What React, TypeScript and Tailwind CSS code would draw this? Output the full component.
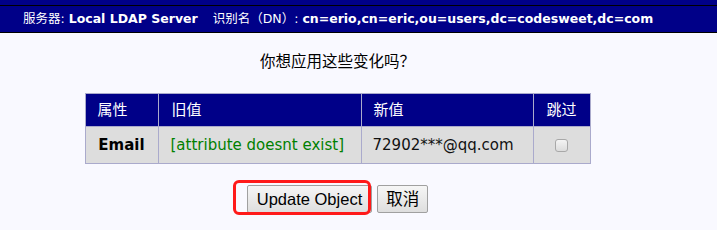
import React from "react";

export default function App() {
  const ui = { fontFamily: '"DejaVu Sans", "Noto Sans CJK SC", sans-serif' };
  return (
    <div className="w-[717px] h-[230px] bg-[#f9f9ff] overflow-hidden" style={ui}>
      <div className="h-[33px] bg-[#000088] pt-[5px]">
        <div className="h-[28px] border-t border-b border-black flex items-center pl-[23px] text-white text-[12.5px] whitespace-nowrap">
          <span className="font-normal">服务器:</span>
          <span className="font-bold ml-[4px]">Local LDAP Server</span>
          <span className="ml-[15px]">识别名（DN）:</span>
          <span className="font-bold ml-[4px]">cn=erio,cn=eric,ou=users,dc=codesweet,dc=com</span>
        </div>
      </div>
      <div className="w-[675px] flex flex-col items-center">
        <div className="mt-[19px] text-[15.5px] text-black h-[20px] leading-[20px]">你想应用这些变化吗？</div>
        <table className="mt-[21px] border-collapse border border-[#aaaacc] text-[15px]">
          <thead>
            <tr className="bg-[#000088] text-white h-[33px]">
              <th className="w-[73px] border border-[#aaaacc] text-left font-normal pl-[12px]">属性</th>
              <th className="w-[203px] border border-[#aaaacc] text-left font-normal pl-[13px]">旧值</th>
              <th className="w-[172px] border border-[#aaaacc] text-left font-normal pl-[12px]">新值</th>
              <th className="w-[57px] border border-[#aaaacc] text-center font-normal">跳过</th>
            </tr>
          </thead>
          <tbody>
            <tr className="bg-[#dddddd] h-[37px]">
              <td className="border border-[#aaaacc] text-center font-bold text-black">Email</td>
              <td className="border border-[#aaaacc] pl-[12px] text-[#008000]">[attribute doesnt exist]</td>
              <td className="border border-[#aaaacc] pl-[11px] text-[#111]">72902***@qq.com</td>
              <td className="border border-[#aaaacc] text-center">
                <span className="inline-block align-middle w-[13px] h-[13px] rounded-[3px] border border-[#a8a8a8] bg-gradient-to-b from-[#f4f4f4] to-[#dcdcdc]"></span>
              </td>
            </tr>
          </tbody>
        </table>
        <div className="mt-[21px] flex gap-[5px] items-center" style={{ fontFamily: '"Liberation Sans", "Noto Sans CJK SC", sans-serif' }}>
          <div className="relative">
            <button className="h-[28px] px-[9px] text-[16.5px] text-black border border-[#a0a0a0] rounded-[2px] bg-gradient-to-b from-[#f6f6f6] to-[#dedede]">Update Object</button>
            <div className="absolute left-[-14px] top-[-5px] w-[138px] h-[35px] border-[3px] border-[#ff1a1a] rounded-[6px] pointer-events-none"></div>
          </div>
          <button className="h-[28px] px-[8px] text-[16.5px] text-black border border-[#a0a0a0] rounded-[2px] bg-gradient-to-b from-[#f6f6f6] to-[#dedede]">取消</button>
        </div>
      </div>
    </div>
  );
}
